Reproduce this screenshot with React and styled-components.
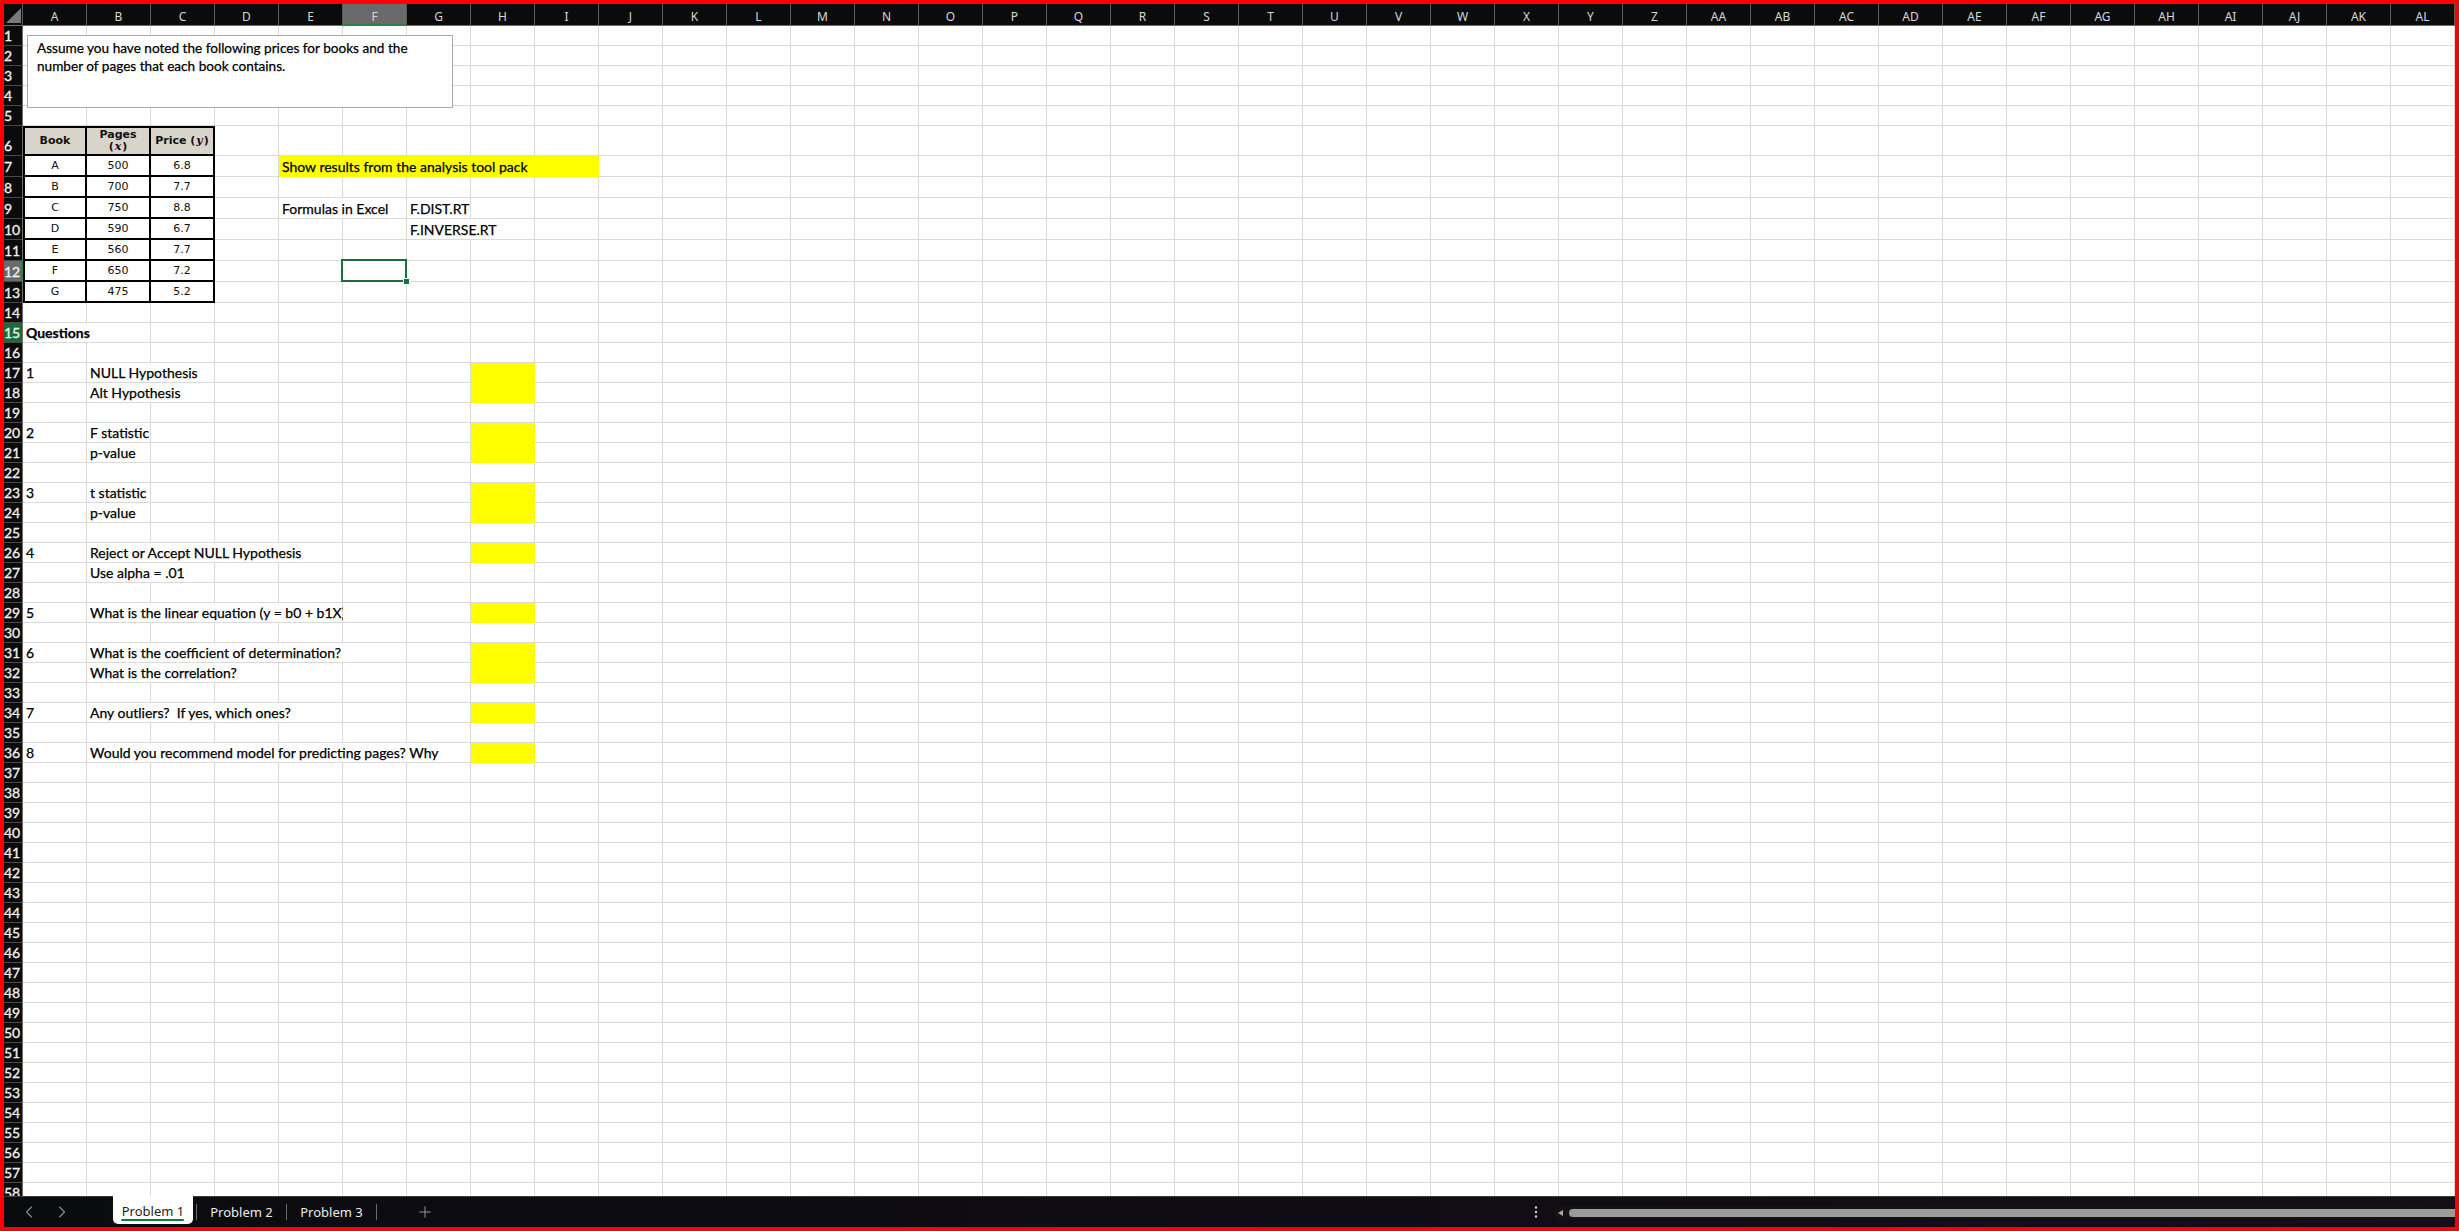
import React from "react";
import styled, { createGlobalStyle, css } from "styled-components";
import { ChevronLeft, ChevronRight, Plus } from "lucide-react";

const GlobalStyle = createGlobalStyle`
  html, body {
    margin: 0;
    padding: 0;
    background: #ff0000;
    overflow: hidden;
  }
  #root {
    width: 2459px;
    height: 1231px;
  }
`;

const YELLOW = "#ffff00";
const GRID_LINE = "#dadada";
const CELL_FONT = `Lato, "Liberation Sans", sans-serif`;
const TABLE_FONT = `"DejaVu Sans", Verdana, sans-serif`;
const UI_FONT = `"Noto Sans", "Open Sans", sans-serif`;

const COLS = Array.from({ length: 38 }, (_, i) =>
  i < 26 ? String.fromCharCode(65 + i) : "A" + String.fromCharCode(39 + i)
);
const ROWS = Array.from({ length: 58 }, (_, i) => i + 1);
const rowHeight = (r) => (r === 6 ? 30 : r >= 7 && r <= 13 ? 21 : 20);

const books = [
  ["A", 500, "6.8"],
  ["B", 700, "7.7"],
  ["C", 750, "8.8"],
  ["D", 590, "6.7"],
  ["E", 560, "7.7"],
  ["F", 650, "7.2"],
  ["G", 475, "5.2"],
];

const answerRows = [17, 18, 20, 21, 23, 24, 26, 29, 31, 32, 34, 36];

const content = {
  7: [{ c: 4, span: 5, text: "Show results from the analysis tool pack", fill: YELLOW }],
  9: [
    { c: 4, span: 2, text: "Formulas in Excel" },
    { c: 6, text: "F.DIST.RT" },
  ],
  10: [{ c: 6, span: 2, text: "F.INVERSE.RT" }],
  15: [{ c: 0, span: 2, text: "Questions", bold: true }],
  17: [{ c: 0, text: "1" }, { c: 1, span: 2, text: "NULL Hypothesis" }],
  18: [{ c: 1, span: 2, text: "Alt Hypothesis" }],
  20: [{ c: 0, text: "2" }, { c: 1, text: "F statistic" }],
  21: [{ c: 1, text: "p-value" }],
  23: [{ c: 0, text: "3" }, { c: 1, text: "t statistic" }],
  24: [{ c: 1, text: "p-value" }],
  26: [{ c: 0, text: "4" }, { c: 1, span: 4, text: "Reject or Accept NULL Hypothesis" }],
  27: [{ c: 1, span: 2, text: "Use alpha = .01" }],
  29: [{ c: 0, text: "5" }, { c: 1, span: 4, text: "What is the linear equation (y = b0 + b1X)" }],
  31: [{ c: 0, text: "6" }, { c: 1, span: 5, text: "What is the coefficient of determination?" }],
  32: [{ c: 1, span: 3, text: "What is the correlation?" }],
  34: [{ c: 0, text: "7" }, { c: 1, span: 4, text: "Any outliers?\u00a0 If yes, which ones?" }],
  36: [{ c: 0, text: "8" }, { c: 1, span: 6, text: "Would you recommend model for predicting pages? Why" }],
};

// Frame
const Frame = styled.div`
  width: 2459px;
  height: 1231px;
  box-sizing: border-box;
  padding: 4px;
  background: #ff0000;
  display: flex;
  flex-direction: column;
`;

const SheetArea = styled.div`
  position: relative;
  flex: 1;
  overflow: hidden;
  background: #fff;
`;

const Grid = styled.div`
  display: grid;
  grid-template-columns: 19px repeat(38, 64px);
  grid-template-rows: 22px ${ROWS.map((r) => rowHeight(r) + "px").join(" ")};
`;

// Headers
const Corner = styled.div`
  background: #0b0b0b;
  border-right: 1px solid #5c5c5c;
  border-bottom: 1px solid #6e6e6e;
  box-sizing: border-box;
  display: flex;
  align-items: flex-end;
  justify-content: flex-end;
  padding: 0 1px 2px 0;
`;

const ColHead = styled.div`
  box-sizing: border-box;
  background: ${({ $active }) => ($active ? "#6a6a6a" : "#0b0b0b")};
  border-right: 1px solid #5c5c5c;
  border-bottom: ${({ $active }) => ($active ? "2px solid #23844b" : "1px solid #6e6e6e")};
  color: #d3d8de;
  font-family: ${UI_FONT};
  font-size: 12px;
  line-height: 19px;
  padding-top: 3px;
  text-align: center;
`;

const RowHead = styled.div`
  box-sizing: border-box;
  background: ${({ $state }) =>
    $state === "active" ? "#6b6b6b" : $state === "hover" ? "#1a6b3c" : "#0b0b0b"};
  border-bottom: 1px solid #4a4a4a;
  border-right: ${({ $state }) => ($state === "active" ? "2px solid #23844b" : "1px solid #6e6e6e")};
  color: #f2f2f2;
  font-family: ${CELL_FONT};
  font-size: 14px;
  line-height: 18px;
  -webkit-text-stroke: 0.3px #f2f2f2;
  display: flex;
  align-items: flex-end;
  overflow: visible;
  white-space: nowrap;
`;

// Cells
const Cell = styled.div`
  box-sizing: border-box;
  grid-column: span ${({ $span }) => $span || 1};
  background: ${({ $fill }) => $fill || "#fff"};
  border-right: 1px solid ${({ $fill }) => $fill || GRID_LINE};
  border-bottom: 1px solid ${({ $fill }) => $fill || GRID_LINE};
  font-family: ${CELL_FONT};
  font-size: 14px;
  font-weight: ${({ $bold }) => ($bold ? 700 : 400)};
  color: #000;
  -webkit-text-stroke: 0.25px #000;
  line-height: 18px;
  white-space: nowrap;
  padding: 0 3px;
  display: flex;
  align-items: flex-end;

  ${({ $selected }) =>
    $selected &&
    css`
      position: relative;
      &::after {
        content: "";
        position: absolute;
        left: -2px;
        top: -2px;
        right: -1px;
        bottom: -1px;
        border: 2px solid #1d6b41;
      }
      &::before {
        content: "";
        position: absolute;
        right: -4px;
        bottom: -4px;
        width: 5px;
        height: 5px;
        background: #1d6b41;
        border: 1px solid #fff;
        z-index: 1;
      }
    `}
`;

const TableCell = styled.div`
  box-sizing: border-box;
  background: ${({ $head }) => ($head ? "#d9d4ca" : "#fff")};
  border-right: 2px solid #000;
  border-bottom: 2px solid #000;
  border-left: ${({ $first }) => ($first ? "2px solid #000" : "none")};
  border-top: ${({ $head }) => ($head ? "2px solid #000" : "none")};
  font-family: ${TABLE_FONT};
  font-size: 11px;
  font-weight: ${({ $head }) => ($head ? 700 : 400)};
  color: #111;
  line-height: 12px;
  display: flex;
  flex-direction: column;
  align-items: center;
  justify-content: center;
  text-align: center;
  white-space: nowrap;
`;

const Var = styled.i`
  font-family: "DejaVu Serif", serif;
  font-style: italic;
  font-weight: 700;
  margin: 0 1px;
`;

// Floating note box over rows 1-4
const NoteBox = styled.div`
  position: absolute;
  left: 23px;
  top: 31px;
  width: 426px;
  height: 73px;
  box-sizing: border-box;
  background: #fff;
  border: 1px solid #a9a9a9;
  padding: 4px 9px;
  font-family: ${CELL_FONT};
  font-size: 13.6px;
  line-height: 17.5px;
  color: #000;
  -webkit-text-stroke: 0.25px #000;
  white-space: nowrap;
  z-index: 2;
`;

// Sheet tab bar
const TabBar = styled.div`
  flex: none;
  height: 31px;
  box-sizing: border-box;
  display: flex;
  align-items: center;
  background: linear-gradient(90deg, #0a0b0f 0%, #100c15 55%, #170c1a 100%);
  border-top: 1px solid #3a3a3a;
  font-family: ${UI_FONT};
`;

const NavButton = styled.div`
  width: 33px;
  height: 100%;
  display: flex;
  align-items: center;
  justify-content: center;
  color: #8d8d8d;
  margin-left: ${({ $first }) => ($first ? "8px" : "0")};
`;

const Tabs = styled.div`
  display: flex;
  align-items: center;
  height: 100%;
  margin-left: 35px;
`;

const Tab = styled.div`
  position: relative;
  box-sizing: border-box;
  height: ${({ $active }) => ($active ? "28px" : "100%")};
  align-self: flex-start;
  margin-top: ${({ $active }) => ($active ? "-1px" : "0")};
  width: ${({ $active }) => ($active ? "80px" : "89px")};
  display: flex;
  align-items: center;
  justify-content: center;
  font-size: 13px;
  color: ${({ $active }) => ($active ? "#1f1f1f" : "#ececec")};
  background: ${({ $active }) => ($active ? "#fff" : "transparent")};
  border-radius: 0 0 5px 5px;
  padding-top: ${({ $active }) => ($active ? "1px" : "0")};

  ${({ $active }) =>
    $active &&
    css`
      &::after {
        content: "";
        position: absolute;
        left: 8px;
        right: 9px;
        bottom: 3px;
        height: 2px;
        border-radius: 1px;
        background: #107c41;
      }
    `}
`;

const TabDivider = styled.div`
  width: 1px;
  height: 16px;
  background: #6a6a6a;
  margin-left: ${({ $gap }) => $gap || 0}px;
`;

const AddButton = styled.div`
  width: 48px;
  height: 100%;
  margin-left: 24px;
  display: flex;
  align-items: center;
  justify-content: center;
  color: #9a9a9a;
`;

const Spacer = styled.div`
  flex: 1;
`;

const MoreButton = styled.div`
  width: 16px;
  height: 100%;
  margin-right: 9px;
  display: flex;
  align-items: center;
  justify-content: center;
`;

const ScrollTrack = styled.div`
  width: 902px;
  height: 13px;
  margin-top: 1px;
  box-sizing: border-box;
  background: #131313;
  border-radius: 7px 0 0 7px;
  display: flex;
  align-items: center;
  padding-left: 5px;
`;

const ScrollArrow = styled.div`
  width: 0;
  height: 0;
  border-top: 3.5px solid transparent;
  border-bottom: 3.5px solid transparent;
  border-right: 5px solid #a8a8a8;
  margin-right: 6px;
`;

const ScrollThumb = styled.div`
  flex: 1;
  height: 8px;
  border-radius: 4px 0 0 4px;
  background: #9b9b9b;
`;

function renderRow(r) {
  const out = [];
  const rowState = r === 12 ? "active" : r === 15 ? "hover" : undefined;
  out.push(
    <RowHead key={`h${r}`} $state={rowState}>
      {r}
    </RowHead>
  );
  const items = content[r] || [];
  let c = 0;
  while (c < COLS.length) {
    const key = `${r}-${c}`;
    if (r >= 6 && r <= 13 && c <= 2) {
      if (r === 6) {
        const head = [
          "Book",
          <>
            <span>Pages</span>
            <span>
              (<Var>x</Var>)
            </span>
          </>,
          <span>
            Price (<Var>y</Var>)
          </span>,
        ][c];
        out.push(
          <TableCell key={key} $head $first={c === 0}>
            {head}
          </TableCell>
        );
      } else {
        out.push(
          <TableCell key={key} $first={c === 0}>
            {books[r - 7][c]}
          </TableCell>
        );
      }
      c += 1;
      continue;
    }
    const item = items.find((it) => it.c === c);
    if (item) {
      out.push(
        <Cell key={key} $span={item.span} $fill={item.fill} $bold={item.bold}>
          {item.text}
        </Cell>
      );
      c += item.span || 1;
      continue;
    }
    const fill = c === 7 && answerRows.includes(r) ? YELLOW : undefined;
    out.push(<Cell key={key} $fill={fill} $selected={r === 12 && c === 5} />);
    c += 1;
  }
  return out;
}

function SelectAllMark() {
  return (
    <svg width="15" height="15" viewBox="0 0 15 15">
      <polygon points="15,0 15,15 0,15" fill="#7a7a7a" />
    </svg>
  );
}

function MoreDots() {
  return (
    <svg width="4" height="14" viewBox="0 0 4 14">
      <circle cx="2" cy="2.5" r="1.2" fill="#d0d0d0" />
      <circle cx="2" cy="7" r="1.2" fill="#d0d0d0" />
      <circle cx="2" cy="11.5" r="1.2" fill="#d0d0d0" />
    </svg>
  );
}

export default function App() {
  return (
    <>
      <GlobalStyle />
      <Frame>
        <SheetArea>
          <Grid>
            <Corner>
              <SelectAllMark />
            </Corner>
            {COLS.map((col, i) => (
              <ColHead key={col} $active={i === 5}>
                {col}
              </ColHead>
            ))}
            {ROWS.map((r) => renderRow(r))}
          </Grid>
          <NoteBox>
            Assume you have noted the following prices for books and the
            <br />
            number of pages that each book contains.
          </NoteBox>
        </SheetArea>
        <TabBar>
          <NavButton $first>
            <ChevronLeft size={20} strokeWidth={1.3} />
          </NavButton>
          <NavButton>
            <ChevronRight size={20} strokeWidth={1.3} />
          </NavButton>
          <Tabs>
            <Tab $active>Problem 1</Tab>
            <TabDivider $gap={3} />
            <Tab>Problem 2</Tab>
            <TabDivider />
            <Tab>Problem 3</Tab>
            <TabDivider />
          </Tabs>
          <AddButton>
            <Plus size={18} strokeWidth={1.3} />
          </AddButton>
          <Spacer />
          <MoreButton>
            <MoreDots />
          </MoreButton>
          <ScrollTrack>
            <ScrollArrow />
            <ScrollThumb />
          </ScrollTrack>
        </TabBar>
      </Frame>
    </>
  );
}
